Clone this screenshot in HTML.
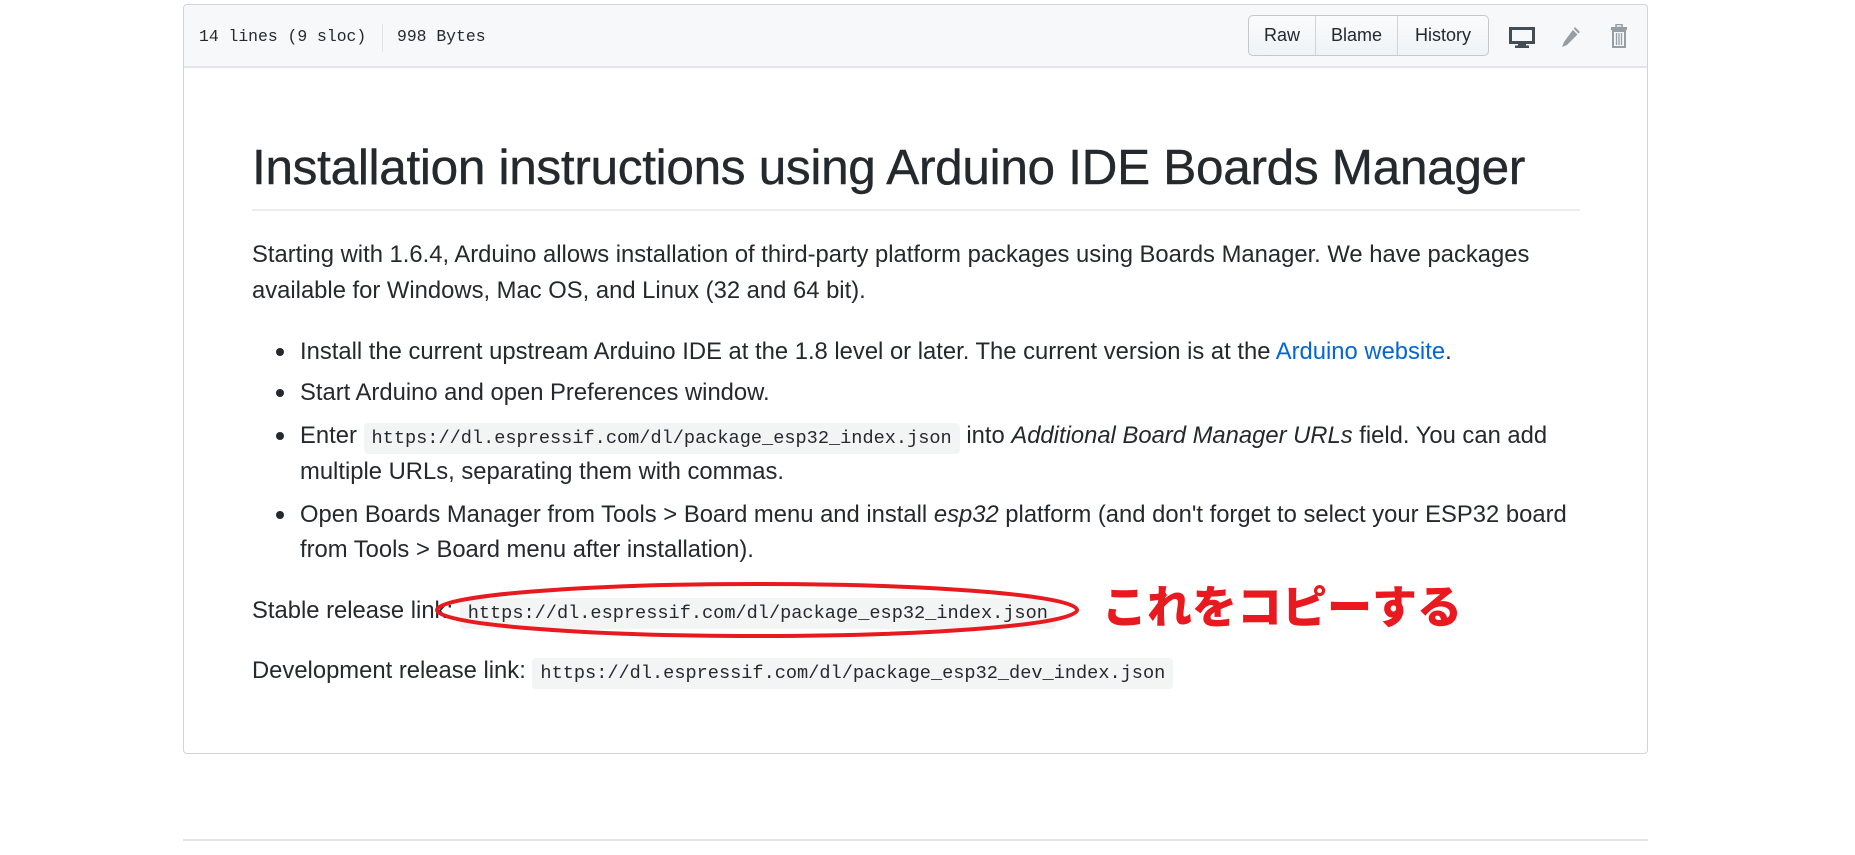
<!DOCTYPE html>
<html><head><meta charset="utf-8"><style>
*{margin:0;padding:0;box-sizing:border-box}
body{width:1855px;height:855px;background:#fff;position:relative;overflow:hidden;font-family:"Liberation Sans","Noto Sans CJK JP",sans-serif;color:#24292e}
.box{position:absolute;left:183px;top:4px;width:1465px;height:750px;border:1px solid #d1d5da;border-radius:4px}
.hdr{position:absolute;left:0;top:0;width:100%;height:63px;background:#f6f8fa;border-bottom:2px solid #e1e4e8;border-radius:4px 4px 0 0}
.mono{font-family:"Liberation Mono",monospace}
.ht{position:absolute;top:22px;font-size:16.4px;color:#24292e}
.sep{position:absolute;left:198px;top:19px;width:1px;height:28px;background:#e1e4e8}
.btns{position:absolute;left:1064px;top:10px;height:41px;display:flex;border:1px solid #c4c8cc;border-radius:5px;background:linear-gradient(#fafbfc,#eff3f6)}
.btns div{font-size:18px;line-height:39px;text-align:center;border-right:1px solid #d1d5da;color:#24292e}
.btns div:last-child{border-right:0}
.l{position:absolute;left:252px;font-size:23.8px;line-height:36px;white-space:nowrap}
.li{left:300px}
.dot{position:absolute;left:276px;width:8px;height:8px;border-radius:50%;background:#24292e}
code{font-family:"Liberation Mono",monospace;font-size:18.6px;background:#f3f4f4;border-radius:4px;padding:5px 8px}
a{color:#0366d6;text-decoration:none}
</style></head><body>
<div class="box">
 <div class="hdr">
  <div class="ht mono" style="left:15px">14 lines (9 sloc)</div>
  <div class="sep"></div>
  <div class="ht mono" style="left:213px">998 Bytes</div>
  <div class="btns"><div style="width:67px">Raw</div><div style="width:82px">Blame</div><div style="width:90px">History</div></div>
  <svg style="position:absolute;left:1325px;top:22px" width="26" height="22" viewBox="0 0 26 22"><rect x="1.5" y="1.5" width="23" height="14" fill="none" stroke="#444d56" stroke-width="3"/><rect x="9" y="16" width="8" height="3" fill="#444d56"/><rect x="6" y="18.5" width="14" height="2.5" fill="#444d56"/></svg>
  <svg style="position:absolute;left:1376px;top:20px" width="22" height="24" viewBox="0 0 22 24"><path d="M15 2 L20 7 L7 20 L2 22 L4 17 Z" fill="#959da5"/><path d="M13 4 L18 9" stroke="#f6f8fa" stroke-width="1.5"/></svg>
  <svg style="position:absolute;left:1426px;top:19px" width="18" height="24" viewBox="0 0 18 24"><rect x="1" y="3" width="16" height="3" fill="#959da5"/><rect x="6" y="0.5" width="6" height="3" fill="none" stroke="#959da5" stroke-width="1.5"/><path d="M3 7h12v16H3z" fill="none" stroke="#959da5" stroke-width="2"/><path d="M6.5 9v12M9 9v12M11.5 9v12" stroke="#959da5" stroke-width="1.3"/></svg>
 </div>
</div>
<div style="position:absolute;left:252px;top:138px;font-size:49.5px;line-height:60px;white-space:nowrap;letter-spacing:-0.3px;-webkit-text-stroke:0.4px #24292e">Installation instructions using Arduino IDE Boards Manager</div>
<div style="position:absolute;left:252px;top:209px;width:1328px;height:2px;background:#eaecef"></div>
<div class="l" style="top:237px">Starting with 1.6.4, Arduino allows installation of third-party platform packages using Boards Manager. We have packages</div>
<div class="l" style="top:273px">available for Windows, Mac OS, and Linux (32 and 64 bit).</div>
<div class="dot" style="top:348px"></div>
<div class="l li" style="top:334px">Install the current upstream Arduino IDE at the 1.8 level or later. The current version is at the <a>Arduino website</a>.</div>
<div class="dot" style="top:389px"></div>
<div class="l li" style="top:375px">Start Arduino and open Preferences window.</div>
<div class="dot" style="top:432px"></div>
<div class="l li" style="top:418px">Enter <code>https://dl.espressif.com/dl/package_esp32_index.json</code> into <i>Additional Board Manager URLs</i> field. You can add</div>
<div class="l li" style="top:454px">multiple URLs, separating them with commas.</div>
<div class="dot" style="top:511px"></div>
<div class="l li" style="top:497px">Open Boards Manager from Tools &gt; Board menu and install <i>esp32</i> platform (and don't forget to select your ESP32 board</div>
<div class="l li" style="top:532px">from Tools &gt; Board menu after installation).</div>
<div class="l" style="top:593px">Stable release link: <code>https://dl.espressif.com/dl/package_esp32_index.json</code></div>
<div class="l" style="top:653px">Development release link: <code>https://dl.espressif.com/dl/package_esp32_dev_index.json</code></div>
<svg style="position:absolute;left:0;top:0" width="1855" height="855"><ellipse cx="757" cy="610" rx="320" ry="26" fill="none" stroke="#e8191f" stroke-width="4"/></svg>
<div style="position:absolute;left:1102px;top:574px;font-family:'Noto Sans CJK JP',sans-serif;font-weight:900;font-size:45px;line-height:60px;color:#e8191f;white-space:nowrap;letter-spacing:0">これをコピーする</div>
<div style="position:absolute;left:183px;top:839px;width:1465px;height:2px;background:#e1e4e8"></div>
</body></html>
